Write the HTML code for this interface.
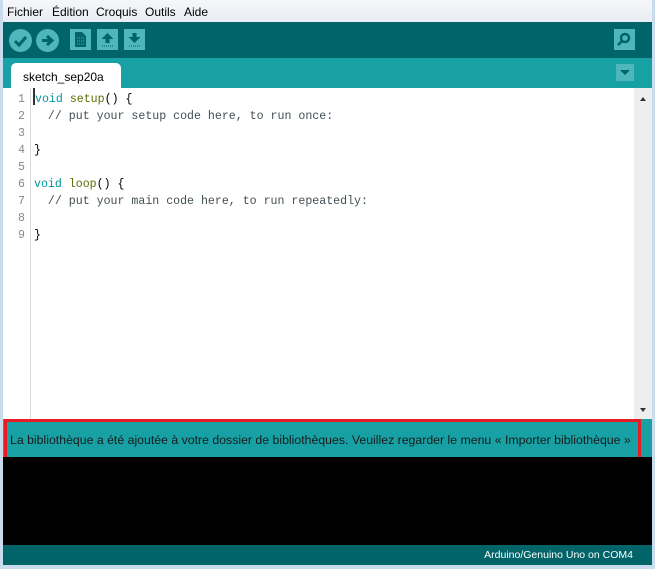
<!DOCTYPE html>
<html><head><meta charset="utf-8"><style>
*{margin:0;padding:0;box-sizing:border-box}
body{width:655px;height:569px;overflow:hidden;background:#c9dcee;font-family:"Liberation Sans",sans-serif;position:relative}
.menu{position:absolute;left:3px;top:0;width:649px;height:22px;background:linear-gradient(#f5f7fa,#e8edf3);font-size:12px;color:#000}
.menu span{position:absolute;top:5px}
.tool{position:absolute;left:3px;top:22px;width:649px;height:36px;background:#006468}
.circ{position:absolute;top:7px;width:23px;height:23px;border-radius:50%;background:#4db7bb}
.sq{position:absolute;top:7px;width:21px;height:21px;background:#4db7bb}
.tabs{position:absolute;left:3px;top:58px;width:649px;height:30px;background:#17a1a5}
.tab{position:absolute;left:8px;top:5px;width:110px;height:25px;background:#fff;border-radius:5px 5px 0 0;font-size:12px;color:#000;padding:7px 0 0 12px}
.dd{position:absolute;left:613px;top:6px;width:18px;height:17px;background:#4db7bb}
.editor{position:absolute;left:3px;top:88px;width:649px;height:331px;background:#fff}
.gutter{position:absolute;left:0;top:0;width:28px;height:331px;border-right:1px solid #ddd;font-family:"Liberation Mono",monospace;font-size:11.6px;color:#888;text-align:right;padding-right:5px}
.code{position:absolute;left:31px;top:0;font-family:"Liberation Mono",monospace;font-size:11.6px;color:#000;white-space:pre}
.l{height:17px;line-height:17px;padding-top:3px}
.gutter .l,.code .l{height:17px}
.kw{color:#00979c}.fn{color:#5e6d03}.cm{color:#434f54}
.scroll{position:absolute;left:631px;top:0;width:18px;height:331px;background:#eee}
.status{position:absolute;left:3px;top:419px;width:649px;height:38px;background:#17a1a5}
.red{position:absolute;left:4px;top:419px;width:637px;height:42px;border:3px solid #e81c24;border-bottom-width:4px}
.msg{position:absolute;left:10px;top:433px;font-size:12.3px;color:#1a1a1a;white-space:nowrap}
.console{position:absolute;left:3px;top:457px;width:649px;height:88px;background:#000}
.bot{position:absolute;left:3px;top:545px;width:649px;height:20px;background:#006468;color:#fff;font-size:10.5px}
</style></head><body>
<div class="menu"><span style="left:4px">Fichier</span><span style="left:49px">Édition</span><span style="left:93px">Croquis</span><span style="left:142px">Outils</span><span style="left:181px">Aide</span></div>
<div class="tool">
<div class="circ" style="left:6px"><svg width="23" height="23"><path d="M6 12l4 4 7-8" stroke="#006468" stroke-width="3" fill="none"/></svg></div>
<div class="circ" style="left:33px"><svg width="23" height="23"><path d="M6 11.5h9M11 7l5 4.5-5 4.5" stroke="#006468" stroke-width="3" fill="none"/></svg></div>
<div class="sq" style="left:67px"><svg width="21" height="21"><path d="M5 3h7l4 4v11H5z" fill="#006468"/><path d="M7 9h7M7 12h7M7 15h7" stroke="#4db7bb" stroke-width="1" stroke-dasharray="1 1"/></svg></div>
<div class="sq" style="left:94px"><svg width="21" height="21"><path d="M10.5 4l6 6h-4v4h-4v-4h-4z" fill="#006468"/><path d="M5 17h11" stroke="#006468" stroke-dasharray="1 1"/></svg></div>
<div class="sq" style="left:121px"><svg width="21" height="21"><path d="M10.5 14l6-6h-4V4h-4v4h-4z" fill="#006468"/><path d="M5 17h11" stroke="#006468" stroke-dasharray="1 1"/></svg></div>
<div class="sq" style="left:611px;width:21px"><svg width="21" height="21"><circle cx="11" cy="9" r="4" stroke="#006468" stroke-width="2.5" fill="none"/><path d="M8 12l-4 4" stroke="#006468" stroke-width="2.5"/></svg></div>
</div>
<div class="tabs"><div class="tab">sketch_sep20a</div><div class="dd"><svg width="18" height="17"><path d="M4 6h10l-5 5z" fill="#006468"/></svg></div></div>
<div class="editor">
<div class="gutter"><div class="l">1</div><div class="l">2</div><div class="l">3</div><div class="l">4</div><div class="l">5</div><div class="l">6</div><div class="l">7</div><div class="l">8</div><div class="l">9</div></div>
<div class="code"><div class="l" style="border-left:2px solid #333;margin-left:-1px;padding-left:0"><span class="kw">void</span> <span class="fn">setup</span>() {</div><div class="l"><span class="cm">  // put your setup code here, to run once:</span></div><div class="l"> </div><div class="l">}</div><div class="l"> </div><div class="l"><span class="kw">void</span> <span class="fn">loop</span>() {</div><div class="l"><span class="cm">  // put your main code here, to run repeatedly:</span></div><div class="l"> </div><div class="l">}</div></div>
<div class="scroll"><svg width="18" height="331"><path d="M6 13h6l-3-4z" fill="#333"/><path d="M6 320h6l-3 4z" fill="#333"/></svg></div>
</div>
<div class="status"></div>
<div class="msg">La bibliothèque a été ajoutée à votre dossier de bibliothèques. Veuillez regarder le menu « Importer bibliothèque »</div>
<div class="red"></div>
<div class="console"></div>
<div class="bot"><span style="position:absolute;right:19px;top:4px">Arduino/Genuino Uno on COM4</span></div>
</body></html>
